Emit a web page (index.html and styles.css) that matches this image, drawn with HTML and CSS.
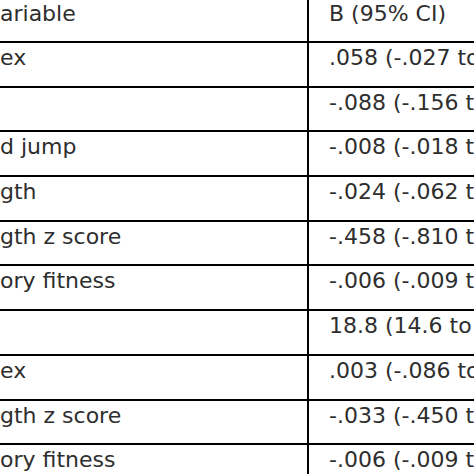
FILE: index.html
```html
<!DOCTYPE html>
<html>
<head>
<meta charset="utf-8">
<link rel="stylesheet" href="styles.css">
</head>
<body>
<div class="table">
  <div class="row head"><div class="c1">ariable</div><div class="c2">B (95% CI)</div></div>
  <div class="row"><div class="c1">ex</div><div class="c2">.058 (-.027 to .143)</div></div>
  <div class="row"><div class="c1"></div><div class="c2">-.088 (-.156 to -.020)</div></div>
  <div class="row"><div class="c1">d jump</div><div class="c2">-.008 (-.018 to .002)</div></div>
  <div class="row"><div class="c1">gth</div><div class="c2">-.024 (-.062 to .014)</div></div>
  <div class="row"><div class="c1">gth z score</div><div class="c2">-.458 (-.810 to -.106)</div></div>
  <div class="row"><div class="c1">ory fitness</div><div class="c2">-.006 (-.009 to -.003)</div></div>
  <div class="row"><div class="c1"></div><div class="c2">18.8 (14.6 to 23.0)</div></div>
  <div class="row"><div class="c1">ex</div><div class="c2">.003 (-.086 to .092)</div></div>
  <div class="row"><div class="c1">gth z score</div><div class="c2">-.033 (-.450 to .384)</div></div>
  <div class="row last"><div class="c1">ory fitness</div><div class="c2">-.006 (-.009 to -.003)</div></div>
</div>
</body>
</html>
```
FILE: styles.css
```css
html, body {
  margin: 0;
  padding: 0;
  background: #fff;
  overflow: hidden;
}
body {
  width: 474px;
  height: 474px;
  font-family: "DejaVu Sans", sans-serif;
  font-size: 22px;
  color: #2e2e2e;
}
.table {
  display: flex;
  flex-direction: column;
  width: 474px;
  overflow: hidden;
}
.row {
  display: grid;
  grid-template-columns: 309px 1fr;
  height: 44.7px;
  box-sizing: border-box;
  border-bottom: 2px solid #000;
  flex: none;
}
.row.head {
  height: 43px;
}
.row.last {
  border-bottom: none;
}
.c1 {
  border-right: 2px solid #000;
  padding-top: 2px;
  white-space: nowrap;
  overflow: hidden;
}
.c2 {
  padding-left: 20px;
  padding-top: 2px;
  white-space: nowrap;
  overflow: hidden;
}
.head .c1, .head .c2 {
  padding-top: 1px;
}
```
